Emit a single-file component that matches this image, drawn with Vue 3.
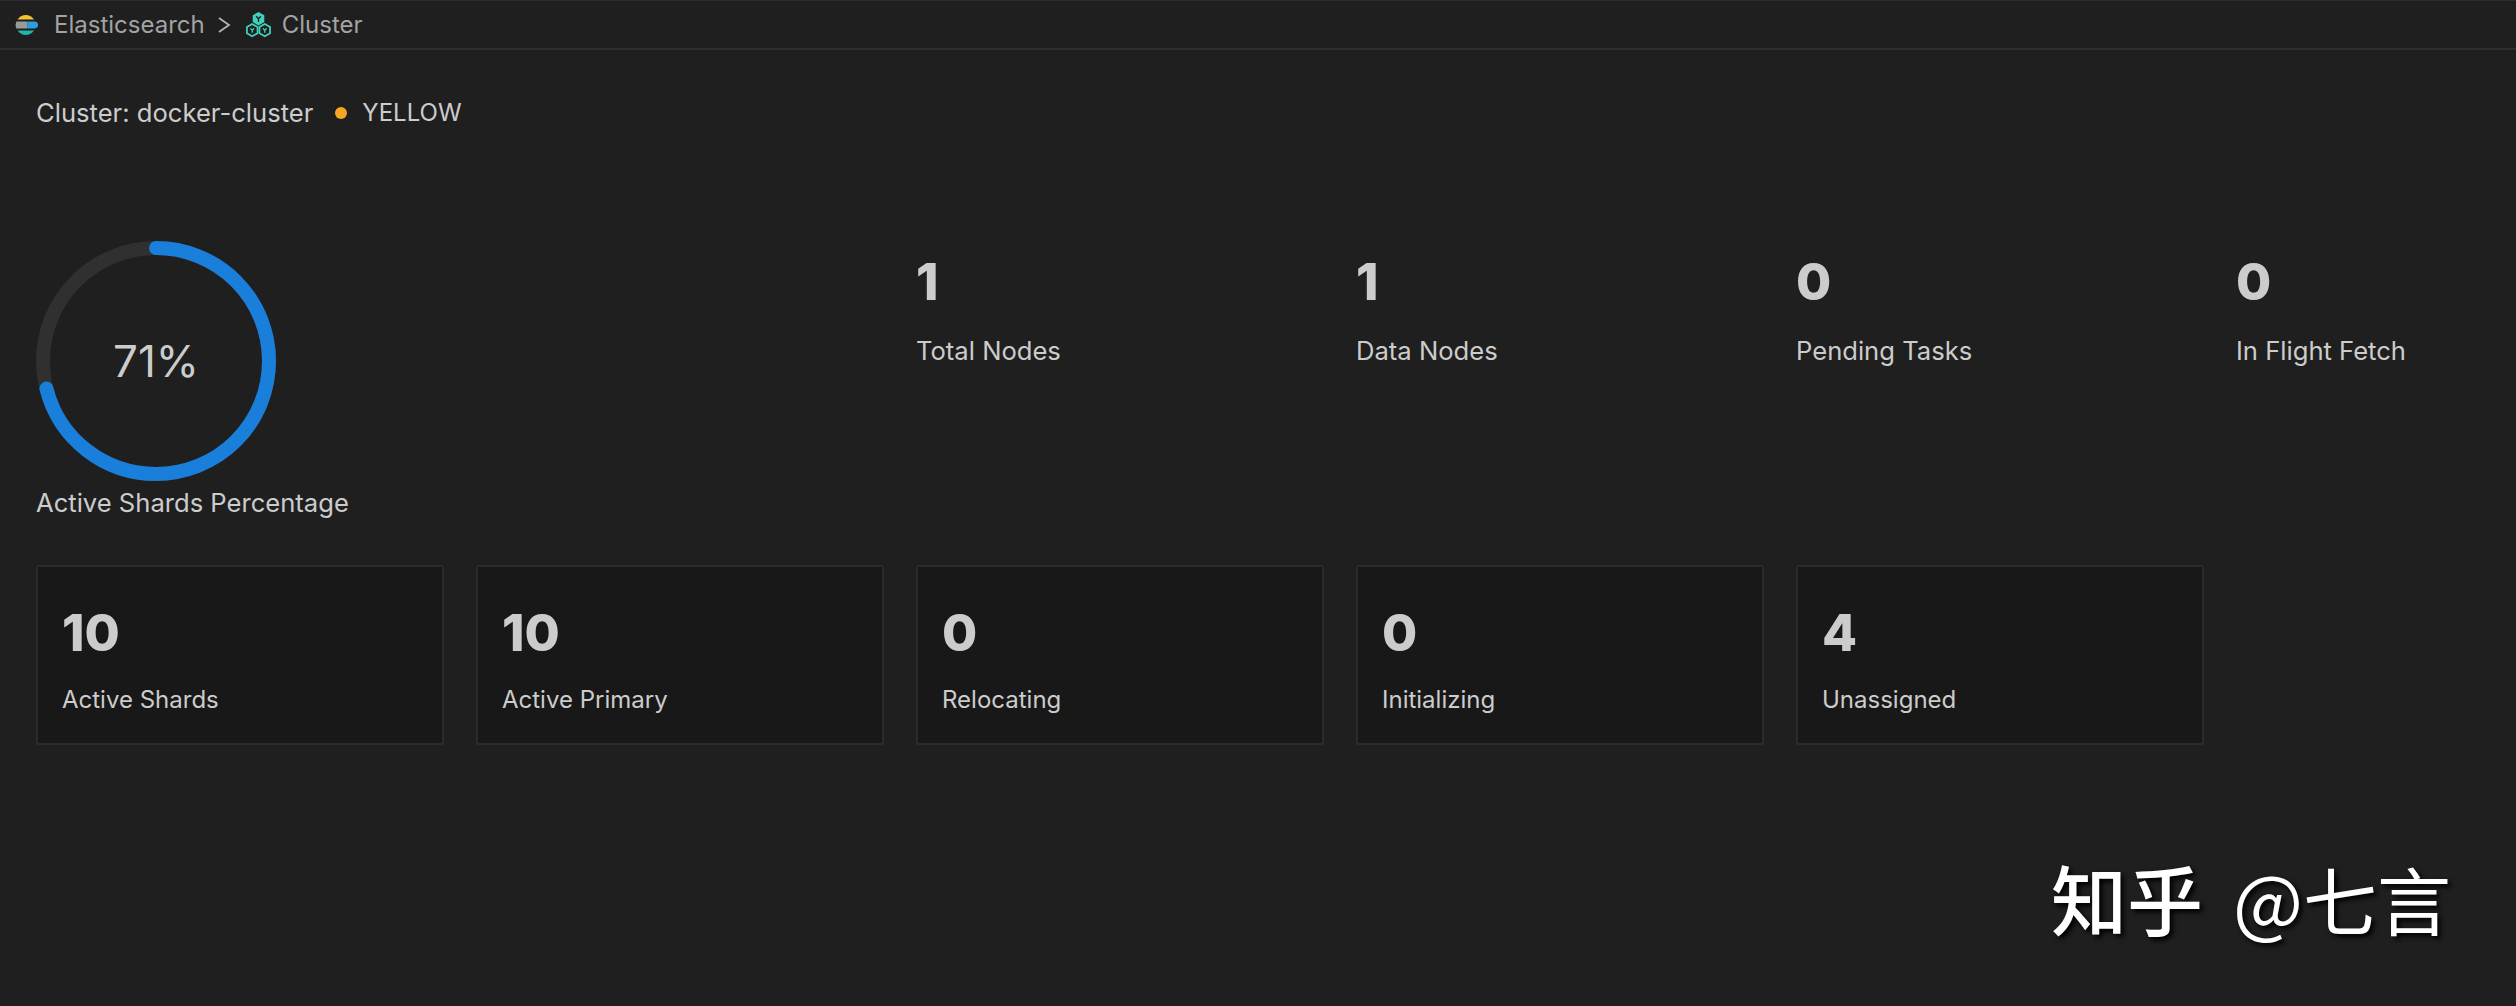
<script setup>
const percent = 71
const radius = 113
const circumference = 2 * Math.PI * radius

const topStats = [
  { value: 1, label: 'Total Nodes' },
  { value: 1, label: 'Data Nodes' },
  { value: 0, label: 'Pending Tasks' },
  { value: 0, label: 'In Flight Fetch' },
]

const shardStats = [
  { value: 10, label: 'Active Shards' },
  { value: 10, label: 'Active Primary' },
  { value: 0, label: 'Relocating' },
  { value: 0, label: 'Initializing' },
  { value: 4, label: 'Unassigned' },
]
</script>

<template>
  <div class="page">
    <div class="breadcrumb">
      <svg class="es-logo" width="24" height="24" viewBox="0 0 24 24">
        <path d="M3.5 6.5a10 10 0 0 1 16.6 0z" fill="#f0c330" />
        <path d="M2.2 8.5h11v7h-11a10 10 0 0 1 0-7z" fill="#9a9a9a" />
        <path d="M13.2 8.5h7.4a3.5 3.5 0 0 1 0 7h-7.4z" fill="#2f9fdc" />
        <path d="M3.5 17.5h16.6a10 10 0 0 1-16.6 0z" fill="#1fb5a8" />
      </svg>
      <span class="crumb es-crumb">Elasticsearch</span>
      <svg class="chevron" width="14" height="18" viewBox="0 0 14 18">
        <path d="M2 2l10 7-10 7" fill="none" stroke="#b4b4b4" stroke-width="1.8" />
      </svg>
      <svg class="cluster-icon" width="27" height="27" viewBox="0 0 28 28">
        <path d="M14 1l6 3.5v7L14 15l-6-3.500v-7z" fill="#3fd3bd" />
        <path d="M11.500 5.500L14 8l2.500-2.500M14 8v3.500" fill="none" stroke="#1f1f1f" stroke-width="1.400" />
        <path d="M7.500 13.500l5.500 3.200v6.300l-5.500 3.200L2 23v-6.300z" fill="none" stroke="#3fd3bd" stroke-width="1.800" />
        <path d="M20.500 13.500l5.500 3.200v6.300l-5.500 3.200L15 23v-6.300z" fill="none" stroke="#3fd3bd" stroke-width="1.800" />
        <path d="M5.500 18l2 2 2-2M7.500 20v2.500M18.500 18l2 2 2-2M20.500 20v2.500" fill="none" stroke="#3fd3bd" stroke-width="1.400" />
      </svg>
      <span class="crumb">Cluster</span>
    </div>

    <div class="cluster-head">
      <span>Cluster: docker-cluster</span>
      <i class="status-dot"></i>
      <span class="status">YELLOW</span>
    </div>

    <div class="board">
      <div class="chart-cell">
        <div class="ring">
          <svg width="240" height="240" viewBox="0 0 240 240">
            <circle cx="120" cy="120" :r="radius" fill="none" stroke="#303030" stroke-width="14" />
            <circle
              cx="120"
              cy="120"
              :r="radius"
              fill="none"
              stroke="#1a7edb"
              stroke-width="14"
              stroke-linecap="round"
              :stroke-dasharray="`${circumference * percent / 100} ${circumference}`"
              transform="rotate(-90 120 120)"
            />
          </svg>
          <span class="ring-text">{{ percent }}%</span>
        </div>
        <div class="chart-label">Active Shards Percentage</div>
      </div>

      <div v-for="item in topStats" :key="item.label" class="stat">
        <div class="value">{{ item.value }}</div>
        <div class="label">{{ item.label }}</div>
      </div>

      <div v-for="item in shardStats" :key="item.label" class="card">
        <div class="value">{{ item.value }}</div>
        <div class="label">{{ item.label }}</div>
      </div>
    </div>

    <div class="watermark"><b>知乎</b><span>@七言</span></div>
  </div>
</template>

<style scoped>
.page {
  position: relative;
  width: 2516px;
  height: 1006px;
  overflow: hidden;
  background: #1f1f1f;
  color: #cccccc;
  font-family: Inter, "Liberation Sans", sans-serif;
  font-size: 25.6px;
}

.breadcrumb {
  display: flex;
  align-items: center;
  box-sizing: border-box;
  height: 50px;
  padding-left: 14px;
  border-top: 1px solid #2c2c2c;
  border-bottom: 2px solid #2e2e2e;
  color: #a3a3a3;
  font-size: 24px;
}

.es-crumb {
  margin-left: 16px;
}

.chevron {
  margin: 0 14px 0 12px;
}

.cluster-icon {
  margin-right: 10px;
}

.cluster-head {
  display: flex;
  align-items: center;
  height: 32px;
  margin-top: 46px;
  padding-left: 36px;
}

.status-dot {
  width: 12px;
  height: 12px;
  margin: 2px 15px 0 22px;
  border-radius: 50%;
  background: #f5a623;
}

.status {
  font-size: 24px;
}

.board {
  display: grid;
  grid-template-columns: repeat(6, 408px);
  grid-template-rows: 292px 180px;
  gap: 32px;
  margin-top: 113px;
  padding-left: 36px;
}

.chart-cell {
  grid-column: span 2;
}

.ring {
  position: relative;
  width: 240px;
  height: 240px;
}

.ring svg {
  display: block;
}

.ring-text {
  position: absolute;
  inset: 0;
  display: flex;
  align-items: center;
  justify-content: center;
  font-size: 44px;
}

.chart-label {
  margin-top: 6px;
  line-height: 32px;
}

.stat {
  padding-top: 10px;
}

.card {
  box-sizing: border-box;
  padding: 35px 24px 0;
  border: 2px solid #2b2b2b;
  border-radius: 2px;
  background: #181818;
}

.value {
  font-size: 51px;
  font-weight: 800;
  line-height: 62px;
}

.label {
  margin-top: 22px;
  line-height: 32px;
}

.card .label {
  margin-top: 20px;
  font-size: 24px;
}

.watermark {
  position: absolute;
  left: 2051px;
  top: 852px;
  color: #ffffff;
  font-family: "Noto Sans CJK SC", sans-serif;
  font-size: 76px;
  line-height: 90px;
  white-space: nowrap;
  text-shadow: 3px 3px 5px #000000;
}

.watermark b {
  font-weight: 500;
}

.watermark span {
  margin-left: 30px;
  font-size: 74px;
}
</style>
